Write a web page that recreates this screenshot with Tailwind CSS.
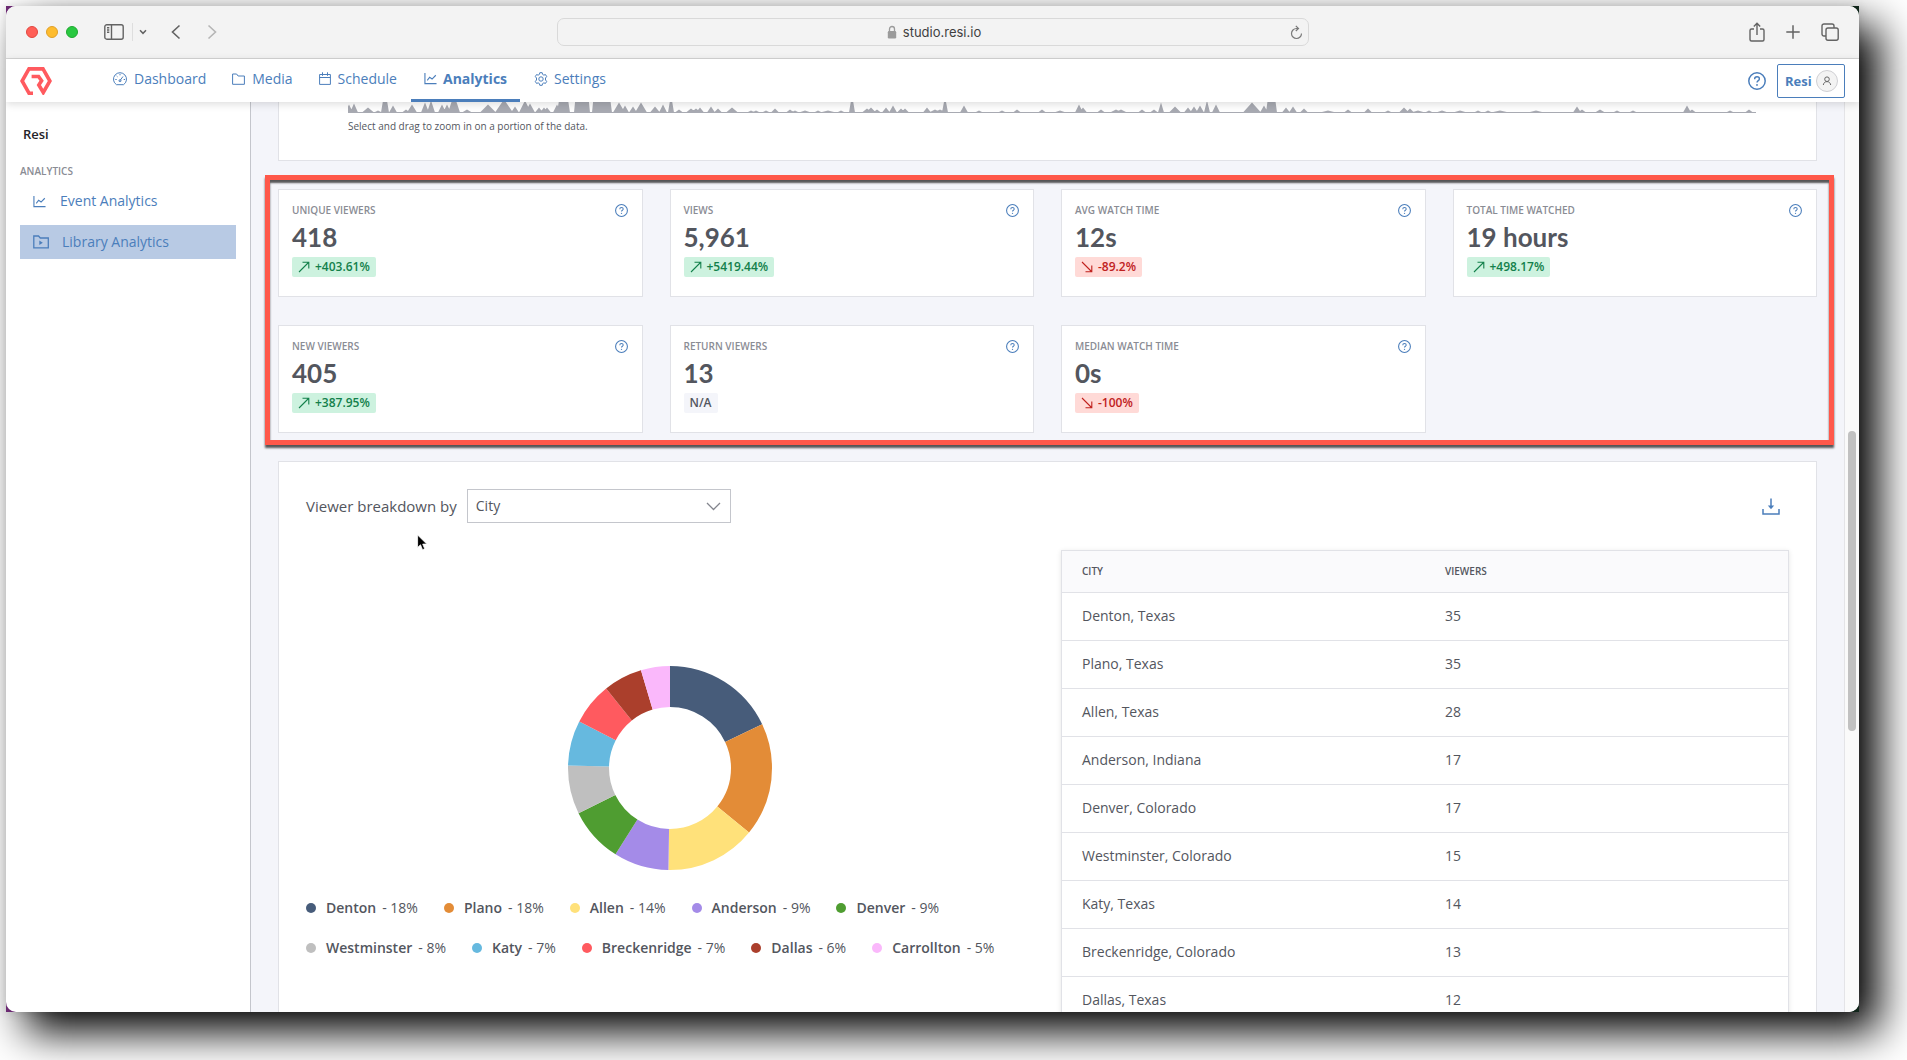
<!DOCTYPE html>
<html lang="en">
<head>
<meta charset="utf-8">
<title>Resi Studio - Library Analytics</title>
<script src="https://cdn.jsdelivr.net/npm/@tailwindcss/browser@4"></script>
</head>
<body class="bg-white h-screen overflow-hidden pt-[6px] pl-[6px] pr-12 pb-12 font-['Open_Sans',sans-serif] text-[#53565e]">
<svg class="hidden" aria-hidden="true">
  <symbol id="help" viewBox="0 0 18 18"><circle cx="9" cy="9" r="8.2" fill="none" stroke="currentColor" stroke-width="1.5"/><path d="M6.6 7.2c0-1.5 1-2.4 2.4-2.4s2.4.9 2.4 2.1c0 1.700-2.400 1.800-2.400 3.600" fill="none" stroke="currentColor" stroke-width="1.400"/><circle cx="9" cy="12.900" r=".95" fill="currentColor"/></symbol>
  <symbol id="chart" viewBox="0 0 14 14"><path d="M1 1v11.500h12.500M3.500 9l2.600-3.400 2.600 2 4-4.100" fill="none" stroke="currentColor" stroke-width="1.200"/></symbol>
  <symbol id="up" viewBox="0 0 12 12"><path d="M1 11 10.500 1.500M4.500 1.200h6.300v6.300" fill="none" stroke="currentColor" stroke-width="1.100"/></symbol>
  <symbol id="down" viewBox="0 0 12 12"><path d="M1 1l9.500 9.500M10.800 4.500v6.300H4.500" fill="none" stroke="currentColor" stroke-width="1.100"/></symbol>
</svg>
<div class="h-full bg-linear-to-r from-[#6b2a72] to-[#10251a] shadow-[20px_20px_40px_#000,0_0_10px_rgba(0,0,0,0.12)]">
<div class="h-full flex flex-col overflow-hidden rounded-[10px] bg-white">

  <!-- Browser toolbar -->
  <div class="h-[53px] shrink-0 bg-[#f3f3f3] border-b border-[#d5d5d5] grid grid-cols-[1fr_minmax(0,752px)_1fr] items-center pb-3 pt-3 text-[#636363]">
    <div class="flex items-center pl-5">
      <div class="flex gap-2">
        <span class="size-3 rounded-full bg-[#ff5f57] border border-[#e2473f]"></span>
        <span class="size-3 rounded-full bg-[#febc2e] border border-[#e0a028]"></span>
        <span class="size-3 rounded-full bg-[#28c840] border border-[#1fa830]"></span>
      </div>
      <button aria-label="Show sidebar" class="ml-[26px]"><svg class="block w-5 h-4" viewBox="0 0 20 16" fill="none" stroke="currentColor" stroke-width="1.400"><rect x=".8" y=".8" width="18.400" height="14.400" rx="2"/><path d="M7.500 1v14M3 3.700h2.300M3 6h2.300M3 8.300h2.300" /></svg></button>
      <span class="ml-2 w-px h-[18px] bg-[#dedede]"></span>
      <button aria-label="Tab groups" class="ml-[6px]"><svg class="block w-2 h-[6px]" viewBox="0 0 8 6" fill="none" stroke="currentColor" stroke-width="1.500"><path d="M1 1.200 4 4.300 7 1.200"/></svg></button>
      <button aria-label="Back" class="ml-6"><svg class="block w-[10px] h-4" viewBox="0 0 10 16" fill="none" stroke="currentColor" stroke-width="1.600"><path d="M8.500 1.500 1.500 8l7 6.500"/></svg></button>
      <button aria-label="Forward" class="ml-[26px] text-[#b5b5b5]"><svg class="block w-[10px] h-4" viewBox="0 0 10 16" fill="none" stroke="currentColor" stroke-width="1.600"><path d="M1.500 1.500l7 6.500-7 6.500"/></svg></button>
    </div>
    <div class="h-7 rounded-[7px] border border-[#d9d9d9] flex items-center px-[5px]">
      <div class="flex-1 flex items-center justify-center gap-[6px] pl-4 text-[13px] leading-5 text-[#3f3f3f] font-[Inter,sans-serif]">
        <svg class="w-[10px] h-[14px] text-[#9b9b9b]" viewBox="0 0 10 14"><rect x=".8" y="6" width="8.400" height="7.500" rx="1.200" fill="currentColor"/><path d="M2.500 6.500V4a2.500 2.500 0 0 1 5 0v2.500" fill="none" stroke="currentColor" stroke-width="1.300"/></svg>
        <span>studio.resi.io</span>
      </div>
      <button aria-label="Reload"><svg class="block w-[13px] h-[15px]" viewBox="0 0 13 15" fill="none" stroke="#7a7a7a" stroke-width="1.200"><path d="M8.300 3.500H6.500a5 5 0 1 0 5 5M5.800.8l2.700 2.700L5.800 6"/></svg></button>
    </div>
    <div class="flex items-center justify-end gap-[21px] pr-5">
      <button aria-label="Share"><svg class="block w-4 h-5" viewBox="0 0 16 20" fill="none" stroke="currentColor" stroke-width="1.400"><path d="M5 7H2.500A1.500 1.500 0 0 0 1 8.500v9A1.500 1.500 0 0 0 2.500 19h11a1.500 1.500 0 0 0 1.500-1.500v-9A1.500 1.500 0 0 0 13.500 7H11M8 13V1.500M4.800 4.500 8 1.300l3.200 3.200"/></svg></button>
      <button aria-label="New tab"><svg class="block size-[14px]" viewBox="0 0 14 14" fill="none" stroke="currentColor" stroke-width="1.500"><path d="M7 .3v13.400M.3 7h13.400"/></svg></button>
      <button aria-label="Show tabs"><svg class="block size-[18px]" viewBox="0 0 18 18" fill="none" stroke="currentColor" stroke-width="1.400"><rect x="5" y="5" width="12.200" height="12.200" rx="2"/><path d="M5 13H3a2 2 0 0 1-2-2V3a2 2 0 0 1 2-2h8a2 2 0 0 1 2 2v2"/></svg></button>
    </div>
  </div>

  <!-- Application header -->
  <header class="relative z-10 h-[43px] shrink-0 bg-white shadow-[0_2px_8px_rgba(0,0,0,0.14)] flex items-center justify-between pl-[14px] pr-[14px] text-[#4b7ebb]">
    <div class="flex h-full items-center">
      <a href="#" aria-label="Resi home"><svg class="block w-8 h-7" viewBox="0 0 32 28" fill="none" stroke="#ff5a5f" stroke-width="3.600"><path d="M13 26.200H9L2.100 14 9 1.900h14L29.900 14l-6.600 11.500L18.800 18l2.800-4.300-3-4.200h-7"/></svg></a>
      <nav class="ml-[51px] flex h-full text-[14px] leading-5">
        <a href="#" class="flex items-center gap-[7px] px-[10px] pb-1"><svg class="size-[14px]" viewBox="0 0 14 14" fill="none" stroke="currentColor"><path d="M3.500 12.700a6.500 6.500 0 1 1 7 0zM7 8.500l3-4M2.300 7.500h1.400M10.700 7.500h1.300M7 2v1.300M3.700 4l.8.8"/><circle cx="7" cy="8.700" r="1"/></svg>Dashboard</a>
        <a href="#" class="ml-[6px] flex items-center gap-[7px] px-[10px] pb-1"><svg class="w-[13px] h-3" viewBox="0 0 13 12" fill="none" stroke="currentColor"><path d="M.6 11.300V1h4l1.500 2h6.300v8.300z"/></svg>Media</a>
        <a href="#" class="ml-[6px] flex items-center gap-[7px] px-[10px] pb-1"><svg class="w-3 h-[13px]" viewBox="0 0 12 13" fill="none" stroke="currentColor"><path d="M.6 2.500h10.800v9.900H.6zM.6 5.500h10.800M3.500.3v3.500M8.500.3v3.500"/></svg>Schedule</a>
        <a href="#" aria-current="page" class="ml-1 flex items-center gap-[6px] px-[13px] pt-[3px] pb-1 border-b-[3px] border-[#4b7ebb] font-bold"><svg class="size-[13px]"><use href="#chart"/></svg>Analytics</a>
        <a href="#" class="ml-1 flex items-center gap-[6px] px-[10px] pb-1"><svg class="size-[14px]" viewBox="0 0 14 14" fill="none" stroke="currentColor"><path d="M5.800.7h2.400l.4 1.700 1.200.7 1.700-.5 1.200 2L11.500 6v2l1.200 1.400-1.200 2-1.700-.5-1.200.7-.4 1.700H5.800l-.4-1.700-1.200-.7-1.700.5-1.200-2L2.500 8V6L1.300 4.600l1.200-2 1.700.5 1.200-.7z"/><circle cx="7" cy="7" r="2.200"/></svg>Settings</a>
      </nav>
    </div>
    <div class="flex items-center gap-[11px]">
      <button aria-label="Help"><svg class="block size-[18px]"><use href="#help"/></svg></button>
      <button class="h-[34px] w-[68px] border border-[#4b7ebb] rounded-[2px] flex items-center justify-between pl-[7px] pr-[6px] text-[13px] leading-5 font-bold">Resi
        <svg class="size-[22px]" viewBox="0 0 22 22"><circle cx="11" cy="11" r="10.500" fill="#f3f3f3" stroke="#cfcfd3"/><circle cx="11" cy="9.200" r="2.300" fill="none" stroke="#666"/><path d="M7.300 15c.3-2 1.600-3.400 3.700-3.400s3.400 1.400 3.700 3.400" fill="none" stroke="#666"/></svg>
      </button>
    </div>
  </header>

  <div class="flex-1 min-h-0 flex">
    <!-- Sidebar -->
    <aside class="w-[245px] shrink-0 border-r border-[#c4c6cc] px-[14px] pt-[22px]">
      <h2 class="pl-[3px] text-[13px] leading-5 font-semibold text-[#232429]">Resi</h2>
      <h3 class="mt-[19px] text-[10px] leading-4 font-semibold text-[#8a8c94]">ANALYTICS</h3>
      <nav class="mt-[5px] text-[14px] leading-5 text-[#4b7ebb]">
        <a href="#" class="h-[34px] flex items-center pl-[13px] gap-[14px]"><svg class="size-[13px]"><use href="#chart"/></svg>Event Analytics</a>
        <a href="#" aria-current="page" class="mt-[7px] h-[34px] bg-[#b8cae4] flex items-center pl-[13px] gap-[13px]"><svg class="w-4 h-[14px]" viewBox="0 0 16 14" fill="none" stroke="currentColor" stroke-width="1.300"><path d="M.8 12.800V1h4.700l1.800 2h8v9.800z"/><path d="M6.300 5.500v4.400L9.800 7.700z" fill="currentColor" stroke="none"/></svg>Library Analytics</a>
      </nav>
    </aside>

    <!-- Page content -->
    <main class="flex-1 min-w-0 bg-[#f4f5fa] px-[27px] overflow-hidden">
      <section class="bg-white border border-t-0 border-[#e1e2e7] h-[59px] pl-[69px] pr-[60px]">
        <svg class="block w-full h-[11px]" viewBox="0 0 1408 11" preserveAspectRatio="none"><path id="wave" fill="#a8aab2"/></svg>
        <p class="mt-[5px] text-[10px] leading-4">Select and drag to zoom in on a portion of the data.</p>
      </section>

      <section aria-label="Viewer statistics" class="mt-[14px] ml-[-13px] mr-[-17px] border-[5px] border-[#ff584a] pt-[9px] pl-2 pr-3 pb-[7px] shadow-[0_3px_2px_rgba(0,0,0,0.65),inset_0_3px_2px_rgba(0,0,0,0.65)]">
        <div id="stats" class="grid grid-cols-4 gap-x-[27px] gap-y-7"></div>
      </section>

      <section class="mt-4 h-[700px] bg-white border border-[#e1e2e7] p-[27px]">
        <div class="flex items-center justify-between pr-[9px]">
          <div class="relative flex items-center gap-[10px]">
            <label for="by" class="text-[15px] leading-6">Viewer breakdown by</label>
            <div class="relative">
              <select id="by" class="appearance-none block w-[264px] h-[34px] border border-[#c4c6cc] bg-white pl-2 text-[14px] leading-5"><option>City</option></select>
              <svg class="absolute right-[10px] top-[13px] w-[15px] h-[9px] pointer-events-none" viewBox="0 0 15 9" fill="none" stroke="#83858d" stroke-width="1.300"><path d="M1 1l6.500 6.500L14 1"/></svg>
            </div>
            <svg class="absolute left-[111px] top-[45px] w-3 h-[17px]" viewBox="0 0 12 17"><path d="M.6 1v12.500l2.900-2.700 2 4.900 2.200-.9-2-4.700h4.100z" fill="#000" stroke="#fff" stroke-width=".8"/></svg>
          </div>
          <button aria-label="Download" class="text-[#4b7ebb]"><svg class="block w-[18px] h-[17px]" viewBox="0 0 18 17" fill="none" stroke="currentColor" stroke-width="1.500"><path d="M1 11v5h16v-5M9 .5V9"/><path d="M5.800 7.500h6.400L9 11.200z" fill="currentColor" stroke="none"/></svg></button>
        </div>
        <div class="mt-[27px] grid grid-cols-2 gap-x-[27px] items-start">
          <div class="pt-[116px]">
            <svg id="donut" class="block mx-auto size-[204px]" viewBox="0 0 204 204" role="img" aria-label="Viewers by city"></svg>
            <ul id="legend" class="mt-7 flex flex-wrap gap-x-[26px] gap-y-5 text-[14px] leading-5"></ul>
          </div>
          <div class="border border-b-0 border-[#e1e2e7] shadow-[0_1px_5px_rgba(0,0,0,0.1)]">
            <table class="w-full table-fixed text-left">
              <thead><tr class="h-[41px] bg-[#fafafc] text-[10px] leading-4"><th scope="col" class="pl-5 font-semibold">CITY</th><th scope="col" class="pl-5 font-semibold">VIEWERS</th></tr></thead>
              <tbody id="rows" class="text-[14px] leading-5"></tbody>
            </table>
          </div>
        </div>
      </section>
    </main>

    <!-- Page scrollbar -->
    <div class="w-[15px] shrink-0 border-l border-[#e4e4e7] bg-[#fafafa] pt-[329px] pl-[3px]">
      <div class="w-2 h-[300px] rounded-full bg-[#c1c1c1]"></div>
    </div>
  </div>
</div>
</div>

<script>
const stats = [
  ['UNIQUE VIEWERS', '418', '+403.61%'], ['VIEWS', '5,961', '+5419.44%'],
  ['AVG WATCH TIME', '12s', '-89.2%'], ['TOTAL TIME WATCHED', '19 hours', '+498.17%'],
  ['NEW VIEWERS', '405', '+387.95%'], ['RETURN VIEWERS', '13', 'N/A'], ['MEDIAN WATCH TIME', '0s', '-100%']
];
const badge = v => v[0] === '+'
  ? `<span class="inline-flex items-center gap-[5px] h-5 px-[6px] rounded-[2px] bg-[#cdf2df] text-[#13804b]"><svg class="size-3"><use href="#up"/></svg>${v}</span>`
  : v[0] === '-'
  ? `<span class="inline-flex items-center gap-[5px] h-5 px-[6px] rounded-[2px] bg-[#ffdad7] text-[#c0211d]"><svg class="size-3"><use href="#down"/></svg>${v}</span>`
  : `<span class="inline-flex items-center h-5 px-[6px] rounded-[2px] bg-[#f4f5fa]">${v}</span>`;
document.getElementById('stats').innerHTML = stats.map(([label, value, change]) => `
  <article class="h-[108px] bg-white border border-[#e1e2e7] pl-[13px] pr-[14px] pt-3">
    <div class="flex items-center justify-between"><h3 class="text-[10px] leading-4 font-semibold text-[#8a8c94]">${label}</h3>
    <button aria-label="About ${label.toLowerCase()}" class="text-[#4b7ebb]"><svg class="block size-[13px]"><use href="#help"/></svg></button></div>
    <p class="mt-[3px] text-[26px] leading-8 font-bold font-[Lato,sans-serif]">${value}</p>
    <p class="mt-1 flex text-[12px] leading-5 font-semibold">${badge(change)}</p>
  </article>`).join('');

const cities = [
  ['Denton', 'Texas', 35, 18, '#475c7a'], ['Plano', 'Texas', 35, 18, '#e38c37'], ['Allen', 'Texas', 28, 14, '#ffe17a'],
  ['Anderson', 'Indiana', 17, 9, '#a48be8'], ['Denver', 'Colorado', 17, 9, '#4f9d31'], ['Westminster', 'Colorado', 15, 8, '#bfbfbf'],
  ['Katy', 'Texas', 14, 7, '#66b9df'], ['Breckenridge', 'Colorado', 13, 7, '#ff5a5f'], ['Dallas', 'Texas', 12, 6, '#ab3f2c'],
  ['Carrollton', 'Texas', 9, 5, '#fab8fb']
];
document.getElementById('rows').innerHTML = cities.slice(0, 9).map(([city, state, n]) =>
  `<tr class="h-12 border-t border-[#e1e2e7]"><td class="pl-5">${city}, ${state}</td><td class="pl-5">${n}</td></tr>`).join('');
document.getElementById('legend').innerHTML = cities.map(([city, , , pct, color]) =>
  `<li class="flex items-center"><span class="size-[10px] rounded-full" style="background:${color}"></span><span class="ml-[10px] font-semibold">${city}</span><span class="ml-[6px]">- ${pct}%</span></li>`).join('');

const total = cities.reduce((sum, c) => sum + c[2], 0);
let start = 0;
document.getElementById('donut').innerHTML = cities.map(c => {
  const arc = `<circle cx="102" cy="102" r="81.5" fill="none" stroke="${c[4]}" stroke-width="41" pathLength="${total}" stroke-dasharray="${c[2]} ${total - c[2]}" stroke-dashoffset="${-start}" transform="rotate(-90 102 102)"/>`;
  start += c[2];
  return arc;
}).join('');

// Timeline peaks: [position, height, half-width]
const peaks = [[1,8],[6,9],[20,5,6],[30,2],[37,24,4],[45,7],[58,3],[64,8,5],[77,10],[83,12],[94,8],[99,8],[106,18,6],[119,3,5],[140,8,8],[156,13,9],[167,6],[177,12,6],[182,9,5],[191,5],[196,5],[199,5],[209,8],[214,30,5],[218,26,4],[230,40,4],[234,40,4],[238,40,4],[248,40,4],[252,40,4],[256,40,4],[260,30,4],[271,10,6],[277,7],[285,6],[293,10,6],[307,6,5],[315,8],[323,18,3],[331,3],[343,4,5],[348,4,5],[352,5],[363,6],[370,4],[384,5,6],[403,2],[408,2],[418,2],[427,4],[442,3],[447,2],[457,2,6],[470,2],[480,2,8],[493,2],[504,18,3],[519,4,5],[523,5,5],[529,3],[538,5],[545,7],[553,4],[557,4],[579,5],[587,3,6],[592,3,6],[597,16,3],[616,7],[631,2],[654,2],[669,3],[694,3],[712,2,6],[731,8],[735,5],[753,3],[768,3,6],[773,3,6],[794,3],[806,3],[813,10,3],[827,6,6],[840,5],[846,6],[852,7],[859,12,3],[868,8],[904,10,9],[916,7],[922,30,4],[925,30,4],[938,5],[945,6],[956,4],[980,2,8],[1000,3],[1020,4],[1040,2],[1056,5,5],[1062,4],[1070,2,7],[1081,2],[1094,2,6],[1112,2,7],[1130,2],[1140,2],[1152,2,9],[1188,2,8],[1229,6],[1234,3],[1252,3,5],[1269,2],[1285,2],[1339,7],[1344,3],[1382,2],[1401,3]];
document.getElementById('wave').setAttribute('d', 'M0 10h1408v1H0z' +
  peaks.map(([x, h, w = 4]) => `M${x - w} 10.500L${x} ${10.5 - h}L${x + w} 10.500z`).join(''));
</script>
</body>
</html>
